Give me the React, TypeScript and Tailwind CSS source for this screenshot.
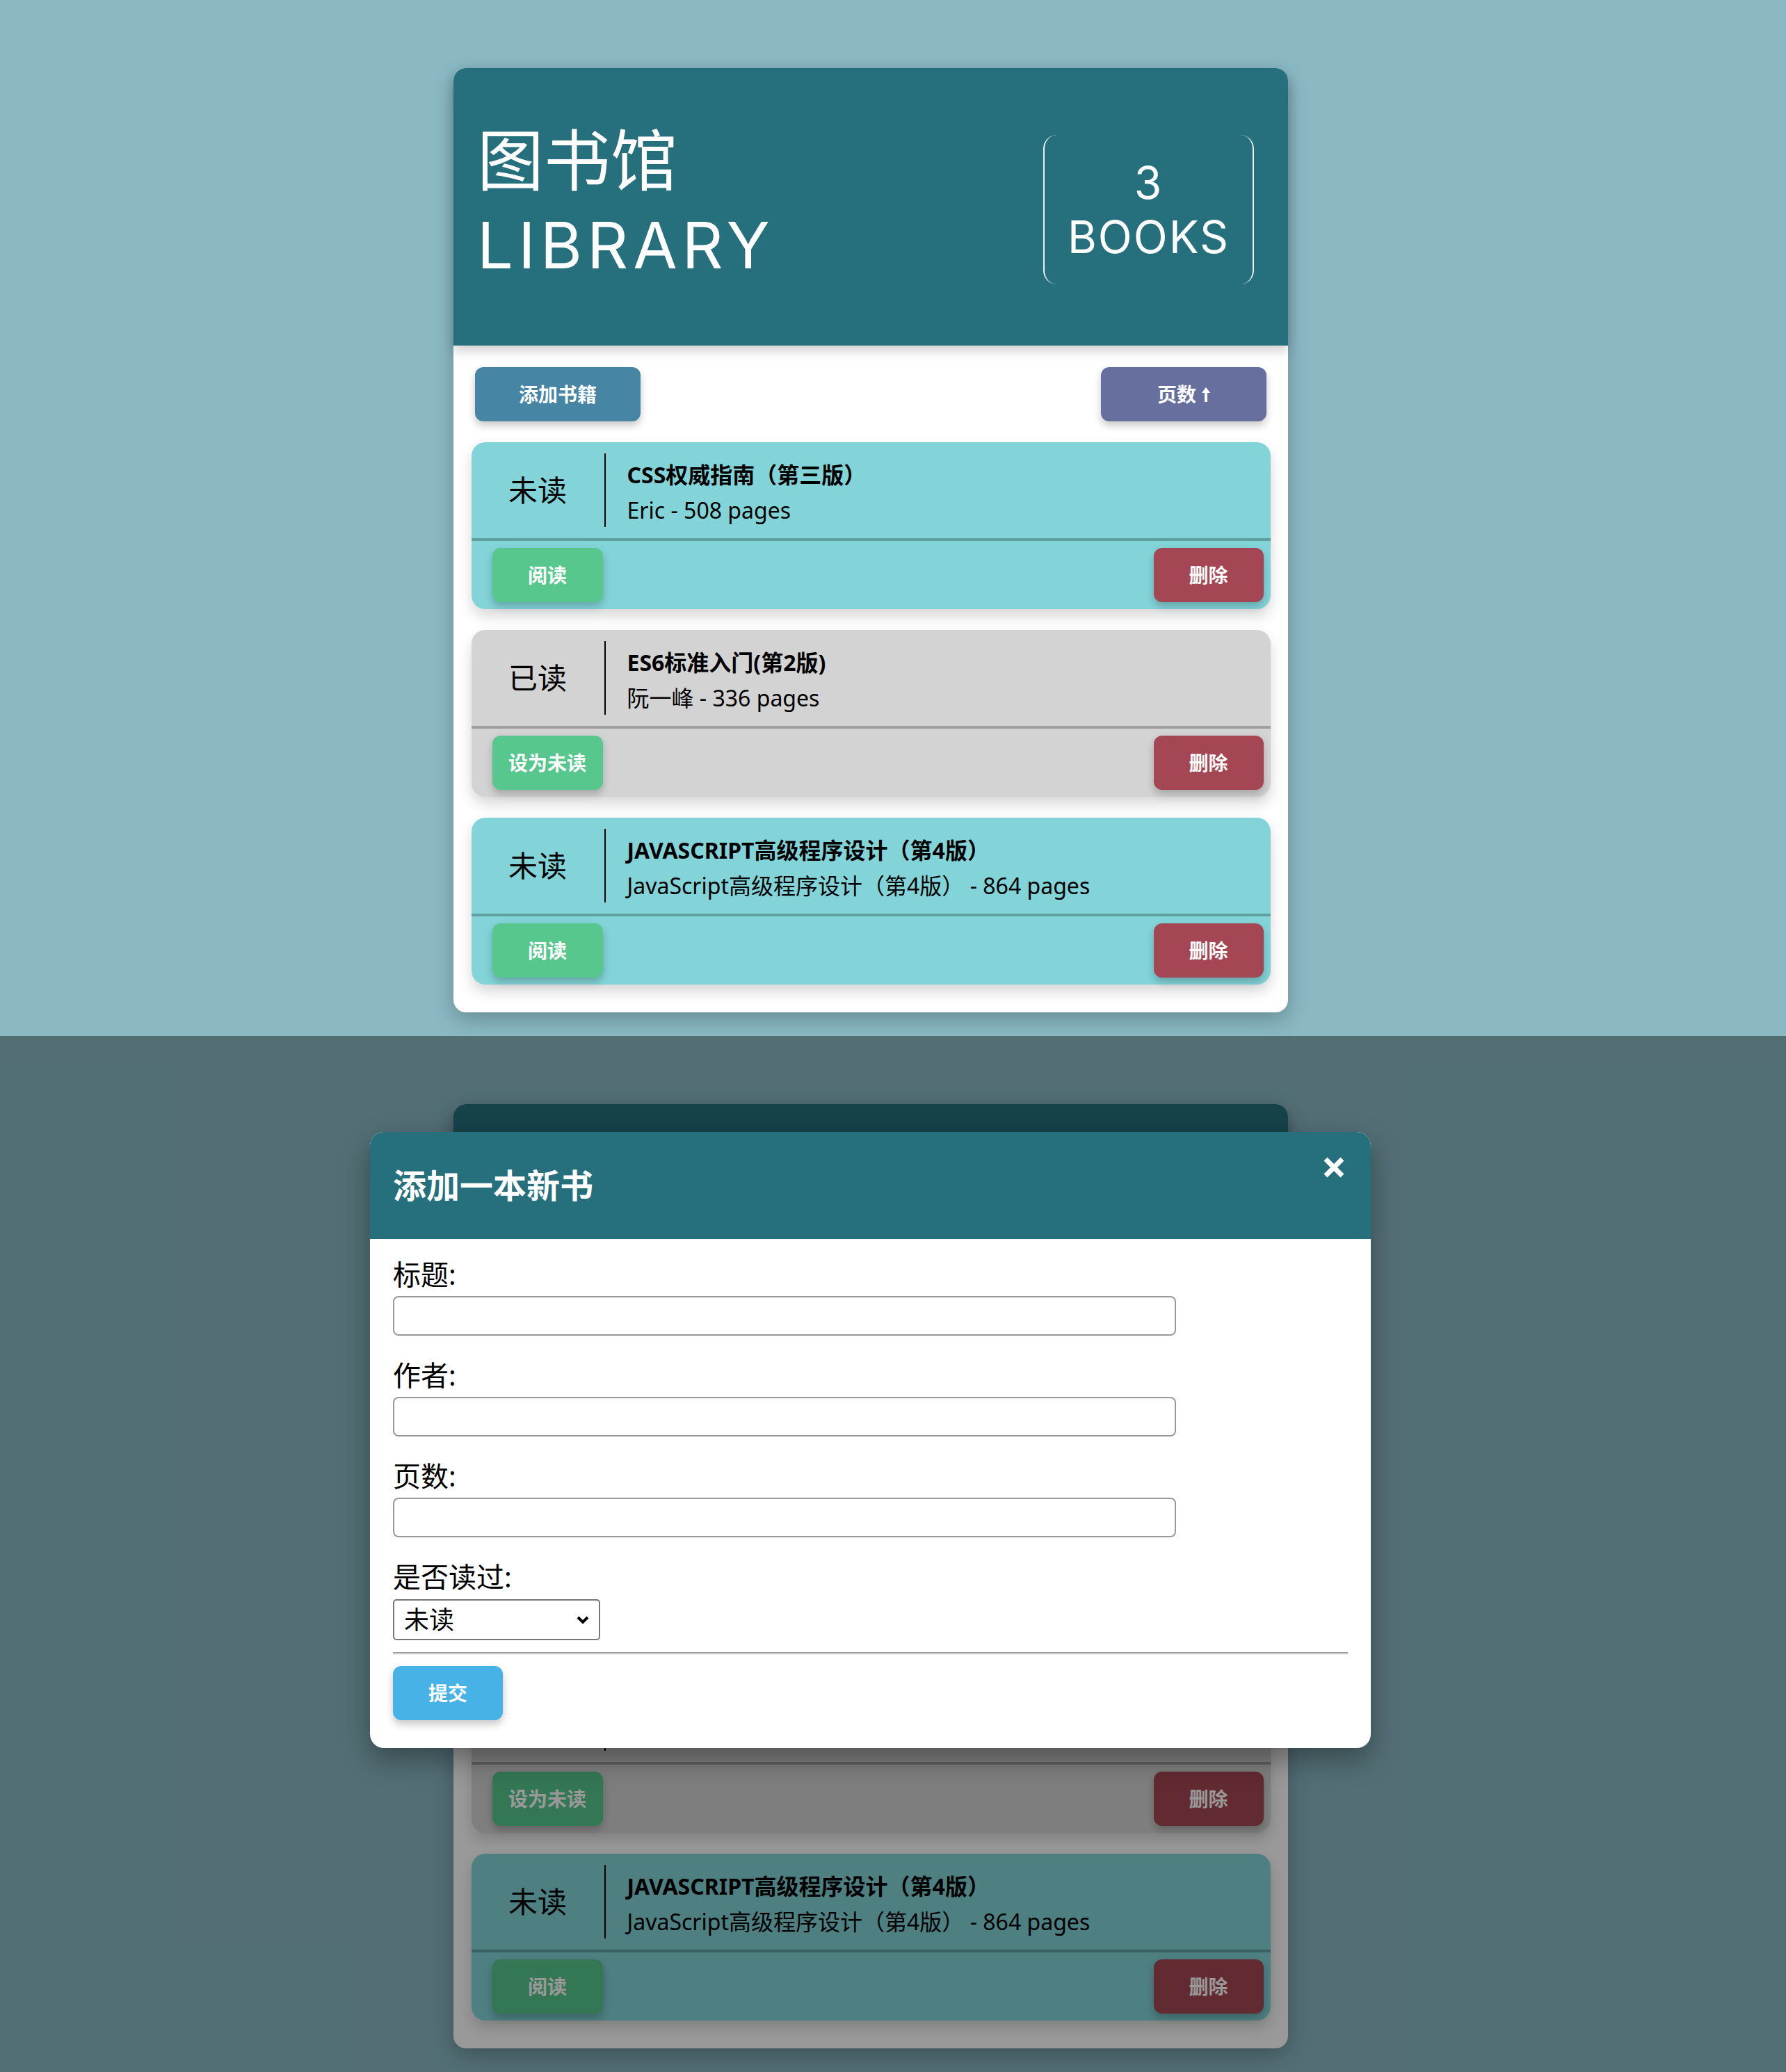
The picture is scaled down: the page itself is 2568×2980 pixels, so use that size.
import React from "react";

type Book = {
  title: string;
  author: string;
  pages: number;
  read: boolean;
};

const books: Book[] = [
  { title: "CSS权威指南（第三版）", author: "Eric", pages: 508, read: false },
  { title: "ES6标准入门(第2版)", author: "阮一峰", pages: 336, read: true },
  {
    title: "JAVASCRIPT高级程序设计（第4版）",
    author: "JavaScript高级程序设计（第4版）",
    pages: 864,
    read: false,
  },
];

const btnShadow = "shadow-[0_6px_12px_rgba(0,0,0,0.22)]";

function UpArrow() {
  return (
    <svg width="12" height="21" viewBox="0 0 12 21" className="ml-[8px]">
      <path d="M6 0 L12 8 H8 V21 H4 V8 H0 Z" fill="white" />
    </svg>
  );
}

function BookCard({ book }: { book: Book }) {
  const bg = book.read ? "bg-[#d3d3d3]" : "bg-[#82d4d8]";
  const line = book.read ? "bg-[#9e9e9e]" : "bg-[#60a0a1]";

  return (
    <div
      className={`mx-auto w-[1149px] rounded-[20px] ${bg} shadow-[0_10px_20px_rgba(0,0,0,0.16)]`}
    >
      <div className="flex h-[138px] items-stretch">
        <div className="flex w-[191px] items-center justify-center text-[42px] leading-none text-black">
          {book.read ? "已读" : "未读"}
        </div>
        <div className="my-[16px] w-[2px] bg-black" />
        <div className="pl-[31px] pt-[24px] text-black">
          <div className="text-[32px] font-bold leading-[46px]">{book.title}</div>
          <div className="mt-[4px] text-[32px] leading-[48px]">
            {book.author} - {book.pages} pages
          </div>
        </div>
      </div>
      <div className={`h-[4px] ${line}`} />
      <div className="flex h-[98px] items-center justify-between pl-[30px] pr-[10px]">
        <button
          className={`flex h-[78px] w-[159px] items-center justify-center rounded-[12px] bg-[#57c78d] text-[28px] font-bold text-white ${btnShadow}`}
        >
          {book.read ? "设为未读" : "阅读"}
        </button>
        <button
          className={`flex h-[78px] w-[158px] items-center justify-center rounded-[12px] bg-[#a44653] text-[28px] font-bold text-white ${btnShadow}`}
        >
          删除
        </button>
      </div>
    </div>
  );
}

function Page() {
  return (
    <div className="flex w-[2504px] justify-center pt-[98px]">
      <div className="w-[1200px] rounded-[18px] bg-white shadow-[0_10px_30px_rgba(0,0,0,0.25)]">
        <header className="relative flex h-[399px] items-start justify-between rounded-t-[18px] bg-[#266f7c] pl-[34px] pr-[49px] text-white shadow-[0_8px_16px_rgba(0,0,0,0.18)] font-['Inter','Noto_Sans_CJK_SC',sans-serif]">
          <div className="pt-[69px]">
            <div className="text-[96px] leading-[116px] font-['Noto_Sans_CJK_SC',sans-serif]">
              图书馆
            </div>
            <div className="mt-[14px] text-[92px] font-normal leading-[112px] tracking-[7px]">
              LIBRARY
            </div>
          </div>
          <div className="mt-[96px] w-[303px] rounded-[20px] border-x-2 border-white/90 pb-[29px] pt-[30px] text-center text-[64px] font-normal leading-[78px] tracking-[2px]">
            <div>3</div>
            <div>BOOKS</div>
          </div>
        </header>

        <div className="flex justify-between px-[31px] pb-[30px] pt-[31px]">
          <button
            className={`flex h-[78px] w-[238px] items-center justify-center rounded-[12px] bg-[#4685a4] text-[28px] font-bold text-white ${btnShadow}`}
          >
            添加书籍
          </button>
          <button
            className={`flex h-[78px] w-[238px] items-center justify-center rounded-[12px] bg-[#676f9f] text-[28px] font-bold text-white ${btnShadow}`}
          >
            页数
            <UpArrow />
          </button>
        </div>

        <div className="flex flex-col gap-[30px] pb-[40px]">
          {books.map((b) => (
            <BookCard key={b.title} book={b} />
          ))}
        </div>
      </div>
    </div>
  );
}

function Field({ label }: { label: string }) {
  return (
    <div className="mb-[33px]">
      <div className="mb-[7px] text-[40px] leading-[48px] text-black">{label}</div>
      <input
        type="text"
        className="block h-[57px] w-[1126px] rounded-[8px] border-2 border-[#999] bg-white"
      />
    </div>
  );
}

function AddBookModal() {
  return (
    <div className="absolute left-[532px] top-[138px] z-30 w-[1439px] rounded-[20px] bg-white shadow-[0_16px_40px_rgba(0,0,0,0.35)]">
      <div className="relative flex h-[154px] items-center rounded-t-[20px] bg-[#266f7c] px-[33px]">
        <h2 className="text-[48px] font-bold leading-none text-white">添加一本新书</h2>
        <svg
          width="30"
          height="30"
          viewBox="0 0 30 30"
          className="absolute right-[38px] top-[36px]"
        >
          <path d="M3 3 L27 27 M27 3 L3 27" stroke="white" strokeWidth="7" />
        </svg>
      </div>
      <form className="px-[33px] pb-[40px] pt-[27px]">
        <Field label="标题:" />
        <Field label="作者:" />
        <Field label="页数:" />
        <div className="mb-[8px] text-[40px] leading-[48px] text-black">是否读过:</div>
        <div className="relative w-[298px]">
          <select className="block h-[59px] w-[298px] appearance-none rounded-[5px] border-2 border-[#767676] bg-white pl-[14px] text-[36px] text-black">
            <option>未读</option>
            <option>已读</option>
          </select>
          <svg
            width="18"
            height="12"
            viewBox="0 0 18 12"
            className="pointer-events-none absolute right-[16px] top-[24px]"
          >
            <path d="M2 2 L9 9 L16 2" stroke="black" strokeWidth="4" fill="none" />
          </svg>
        </div>
        <hr className="mt-[17px] h-0 border-0 border-t-2 border-b-2 border-t-[#9a9a9a] border-b-[#eeeeee]" />
        <button
          type="button"
          className={`mt-[16px] flex h-[78px] w-[158px] items-center justify-center rounded-[12px] bg-[#47b2e6] text-[28px] font-bold text-white ${btnShadow}`}
        >
          提交
        </button>
      </form>
    </div>
  );
}

export default function App() {
  return (
    <div className="w-[2568px] font-['Noto_Sans','Noto_Sans_CJK_SC',sans-serif]">
      <section className="h-[1490px] overflow-hidden bg-[#8ab9c4]">
        <Page />
      </section>
      <section className="relative h-[1490px] overflow-hidden bg-[#8ab9c4]">
        <Page />
        <div className="absolute inset-0 z-20 bg-black/40" />
        <AddBookModal />
      </section>
    </div>
  );
}
